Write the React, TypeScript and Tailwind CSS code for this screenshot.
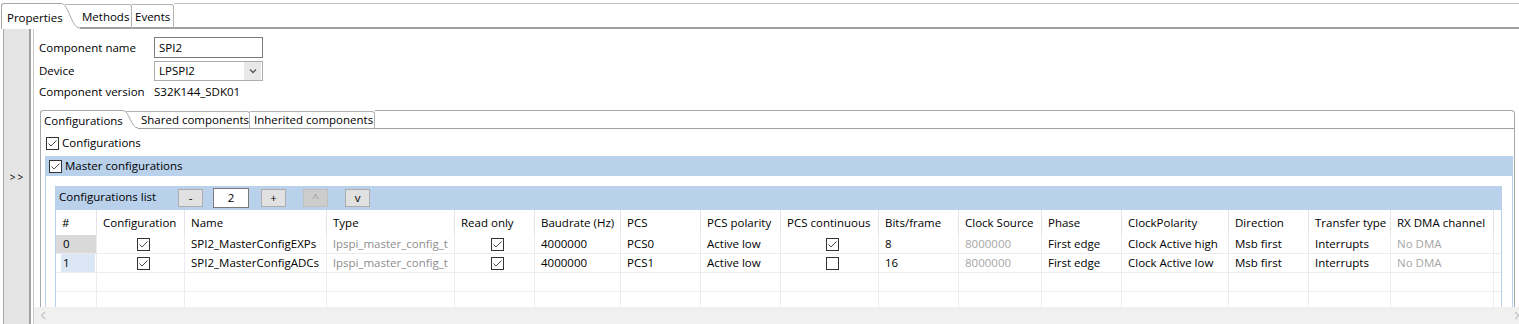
import React from 'react';

type Cell = string | boolean;

const columns: { label: string; w: number }[] = [
  { label: '#', w: 41 },
  { label: 'Configuration', w: 88 },
  { label: 'Name', w: 142 },
  { label: 'Type', w: 128 },
  { label: 'Read only', w: 80 },
  { label: 'Baudrate (Hz)', w: 86 },
  { label: 'PCS', w: 80 },
  { label: 'PCS polarity', w: 80 },
  { label: 'PCS continuous', w: 98 },
  { label: 'Bits/frame', w: 80 },
  { label: 'Clock Source', w: 83 },
  { label: 'Phase', w: 80 },
  { label: 'ClockPolarity', w: 107 },
  { label: 'Direction', w: 80 },
  { label: 'Transfer type', w: 82 },
  { label: 'RX DMA channel', w: 103 },
];

const rows: Cell[][] = [
  ['0', true, 'SPI2_MasterConfigEXPs', 'lpspi_master_config_t', true, '4000000', 'PCS0', 'Active low', true, '8', '8000000', 'First edge', 'Clock Active high', 'Msb first', 'Interrupts', 'No DMA'],
  ['1', true, 'SPI2_MasterConfigADCs', 'lpspi_master_config_t', true, '4000000', 'PCS1', 'Active low', false, '16', '8000000', 'First edge', 'Clock Active low', 'Msb first', 'Interrupts', 'No DMA'],
];

// grey text columns: Type, Clock Source, RX DMA channel
const mutedCols: Record<number, string> = { 3: 'text-[#8e8e8e]', 10: 'text-[#a6a6a6]', 15: 'text-[#a6a6a6]' };

function Check({ checked = true }: { checked?: boolean }) {
  return (
    <svg width="13" height="13" viewBox="0 0 13 13" className="shrink-0">
      <rect x="0.5" y="0.5" width="12" height="12" fill="white" stroke="#333333" />
      {checked && <path d="M2.5 6.5 L5 9 L10.5 3.5" fill="none" stroke="#4a4a4a" strokeWidth="1" />}
    </svg>
  );
}

function SmallButton({ label, disabled = false }: { label: string; disabled?: boolean }) {
  return (
    <div
      className={`w-[25px] h-[18px] flex items-center justify-center border ${
        disabled ? 'bg-[#cccccc] border-[#bfbfbf] text-[#a0a0a0]' : 'bg-[#e1e1e1] border-[#adadad] text-black'
      }`}
    >
      {label}
    </div>
  );
}

export default function App() {
  return (
    <div className="w-[1519px] h-[324px] bg-white overflow-hidden flex flex-col text-[11.5px] text-black leading-none [font-family:'Open_Sans','Noto_Sans',sans-serif]">
      {/* Top tab strip */}
      <div className="h-[29px] flex items-end shrink-0">
        <div className="ml-[1px] w-[60px] h-[26px] border-l border-t border-[#a8a8a8] rounded-tl-[3px] flex items-center pl-[5px] pt-[2px] whitespace-nowrap">
          Properties
        </div>
        <svg width="19" height="26" className="shrink-0">
          <path d="M4 1.5 H19" stroke="#b4b4b4" fill="none" />
          <path d="M0 0.5 C8 0.5 10 25 19 25" fill="none" stroke="#a8a8a8" />
        </svg>
        <div className="w-[52px] h-[25px] border-t border-r border-b-2 border-[#b4b4b4] border-b-[#a0a0a0] rounded-tr-[3px] flex items-center pl-[2px] pt-[1px] whitespace-nowrap">
          Methods
        </div>
        <div className="w-[42px] h-[25px] border-t border-r border-b-2 border-[#b4b4b4] border-b-[#a0a0a0] rounded-tr-[3px] flex items-center pl-[3px] pt-[1px] whitespace-nowrap">
          Events
        </div>
        <div className="flex-1 h-[26px] border-t border-[#c4c4c4] border-b-2 border-b-[#a0a0a0]" />
      </div>

      {/* Main area */}
      <div className="flex-1 flex min-h-0">
        <div className="w-[4px] border-r border-[#a8a8a8]" />
        <div className="w-[27px] bg-[#e4e4e4] border-r-2 border-[#a0a0a0] flex items-center justify-center text-[10px] tracking-[2px] pl-[2px]">
          &gt;&gt;
        </div>
        <div className="w-[2px]" />

        <div className="flex-1 flex flex-col border-l border-[#c8c8c8] min-w-0">
          <div className="flex-1 flex flex-col min-h-0 overflow-hidden">
            {/* Component form */}
            <div className="pl-[5px] pt-[8px] flex flex-col">
              <div className="flex items-center h-[21px]">
                <span className="w-[115px]">Component name</span>
                <div className="w-[109px] h-[21px] border border-[#7a7a7a] flex items-center pl-[4px]">SPI2</div>
              </div>
              <div className="flex items-center h-[20px] mt-[3px]">
                <span className="w-[115px]">Device</span>
                <div className="w-[109px] h-[20px] border border-[#adadad] flex items-center pl-[4px] pr-[1px]">
                  <span className="flex-1">LPSPI2</span>
                  <div className="w-[17px] h-[18px] bg-[#e8e8e8] flex items-center justify-center">
                    <svg width="8" height="6" viewBox="0 0 8 6">
                      <path d="M1 1.5 L4 4.5 L7 1.5" fill="none" stroke="#555555" strokeWidth="1.3" />
                    </svg>
                  </div>
                </div>
              </div>
              <div className="flex items-center h-[20px] mt-[1px]">
                <span className="w-[115px]">Component version</span>
                <span>S32K144_SDK01</span>
              </div>
            </div>

            {/* Inner tab folder */}
            <div className="ml-[6px] mr-[4px] mt-[8px] flex-1 flex flex-col min-h-0">
              <div className="h-[19px] flex items-end shrink-0">
                <div className="w-[83px] h-[19px] border-l border-t border-[#a8a8a8] rounded-tl-[3px] flex items-center pl-[3px] pt-[1px] whitespace-nowrap">
                  Configurations
                </div>
                <svg width="15" height="19" className="shrink-0">
                  <path d="M3 1.5 H15" stroke="#b4b4b4" fill="none" />
                  <path d="M0 0.5 C6 0.5 8 18 15 18" fill="none" stroke="#a8a8a8" />
                </svg>
                <div className="w-[112px] h-[18px] border-t border-r border-b border-[#b4b4b4] border-b-[#a0a0a0] rounded-tr-[3px] flex items-center pl-[3px] whitespace-nowrap overflow-hidden">
                  Shared components
                </div>
                <div className="w-[125px] h-[18px] border-t border-r border-b border-[#b4b4b4] border-b-[#a0a0a0] rounded-tr-[3px] flex items-center pl-[4px] whitespace-nowrap overflow-hidden">
                  Inherited components
                </div>
                <div className="flex-1 h-[19px] border-t border-r border-[#a8a8a8] border-b border-b-[#a0a0a0] rounded-tr-[4px]" />
              </div>

              <div className="flex-1 flex flex-col border-l border-r border-[#a8a8a8] min-h-0">
                <div className="flex items-center h-[20px] mt-[4px] pl-[5px] gap-[3px]">
                  <Check />
                  <span>Configurations</span>
                </div>

                {/* Master configurations */}
                <div className="ml-[4px] mr-[1px] mt-[3px] flex-1 flex flex-col min-h-0">
                  <div className="h-[20px] bg-[#b9d1ea] flex items-center pl-[4px] gap-[3px] shrink-0">
                    <Check />
                    <span>Master configurations</span>
                  </div>
                  <div className="flex-1 flex flex-col border-l border-r border-[#b9d1ea] min-h-0">
                    <div className="ml-[9px] mr-[10px] mt-[10px] flex-1 flex flex-col border-l border-r border-[#b9d1ea] min-h-0">
                      {/* Configurations list bar */}
                      <div className="h-[24px] bg-[#b9d1ea] flex items-center shrink-0 -mx-[1px]">
                        <span className="w-[123px] pl-[4px] pb-[3px] whitespace-nowrap">Configurations list</span>
                        <SmallButton label="-" />
                        <div className="ml-[10px] w-[36px] h-[20px] bg-white border border-[#7a7a7a] flex items-center justify-center">2</div>
                        <div className="ml-[12px]"><SmallButton label="+" /></div>
                        <div className="ml-[17px]"><SmallButton label="^" disabled /></div>
                        <div className="ml-[17px]"><SmallButton label="v" /></div>
                      </div>

                      {/* Table */}
                      <div className="flex-1 flex flex-col min-h-0 overflow-hidden">
                        <div className="h-[25px] flex shrink-0">
                          {columns.map((c, i) => (
                            <div
                              key={i}
                              style={{ width: c.w }}
                              className="h-full border-r border-[#e3e3e3] flex items-center pl-[6px] pt-[1px] shrink-0 whitespace-nowrap"
                            >
                              {c.label}
                            </div>
                          ))}
                          <div className="flex-1" />
                        </div>

                        {[...rows, null, null].map((r, ri) => (
                          <div key={ri} className="h-[19px] flex shrink-0 border-b border-[#ececec]">
                            {columns.map((c, ci) => {
                              const v = r ? r[ci] : '';
                              let content: React.ReactNode = null;
                              if (typeof v === 'boolean') {
                                content = (
                                  <div className="w-full flex justify-center">
                                    <Check checked={v} />
                                  </div>
                                );
                              } else if (ci === 0 && r) {
                                content = (
                                  <div
                                    className={`h-full flex items-center ${
                                      ri === 0 ? 'w-full bg-[#d9d9d9] pl-[7px]' : 'ml-[5px] w-[34px] bg-[#dce7f5] pl-[2px]'
                                    }`}
                                  >
                                    {v}
                                  </div>
                                );
                              } else {
                                content = <span className={mutedCols[ci] ?? ''}>{v}</span>;
                              }
                              return (
                                <div
                                  key={ci}
                                  style={{ width: c.w }}
                                  className={`h-full border-r border-[#ececec] flex items-center shrink-0 whitespace-nowrap ${
                                    ci === 0 ? '' : 'pl-[6px]'
                                  }`}
                                >
                                  {content}
                                </div>
                              );
                            })}
                            <div className="flex-1" />
                          </div>
                        ))}
                      </div>
                    </div>
                  </div>
                </div>
              </div>
            </div>
          </div>

          {/* Horizontal scrollbar */}
          <div className="h-[17px] bg-[#f0f0f0] flex items-center justify-between pl-[6px] pr-0 shrink-0">
            <svg width="6" height="9" viewBox="0 0 6 9">
              <path d="M5 1 L1.5 4.5 L5 8" fill="none" stroke="#c2c2c2" strokeWidth="1.2" />
            </svg>
            <svg width="4" height="9" viewBox="0 0 4 9">
              <path d="M0.5 1 L3.5 4.5 L0.5 8" fill="none" stroke="#c2c2c2" strokeWidth="1.2" />
            </svg>
          </div>
        </div>
      </div>
    </div>
  );
}
